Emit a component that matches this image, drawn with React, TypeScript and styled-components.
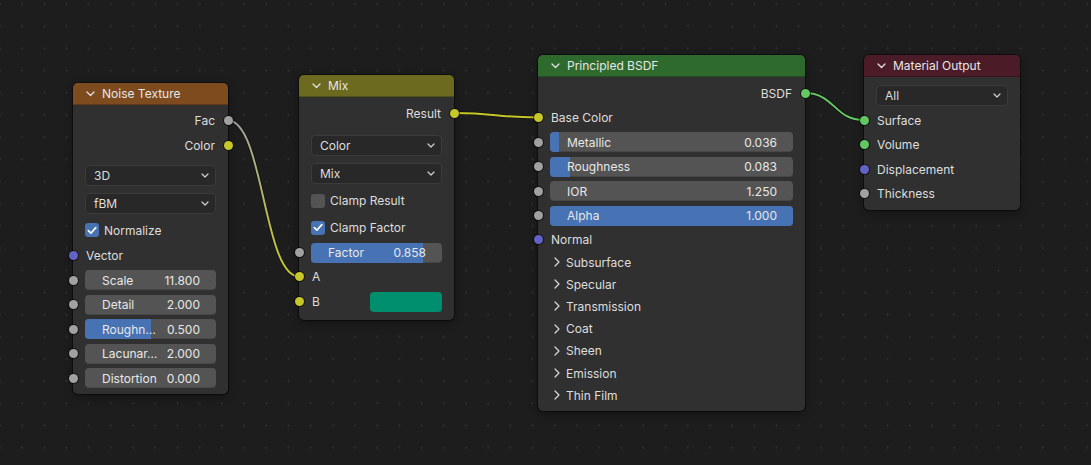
import styled, { createGlobalStyle } from "styled-components";

const GlobalStyle = createGlobalStyle`
  html, body {
    margin: 0;
    padding: 0;
    background: #1d1d1d;
  }
  body {
    font-family: Inter, "Noto Sans", "DejaVu Sans", sans-serif;
    font-size: 12px;
    color: #dedede;
  }
`;

const Canvas = styled.div`
  position: relative;
  width: 1091px;
  height: 465px;
  overflow: hidden;
  background-color: #1d1d1d;
  background-image: radial-gradient(circle, #2d2d2d 0.9px, transparent 1.3px);
  background-size: 22.2px 22.2px;
  background-position: -11.1px -7.1px;
`;

const Wires = styled.svg`
  position: absolute;
  left: 0;
  top: 0;
  z-index: 0;
`;

const NodeBox = styled.div<{ $x: number; $y: number; $w: number }>`
  position: absolute;
  left: ${(p) => p.$x}px;
  top: ${(p) => p.$y}px;
  width: ${(p) => p.$w}px;
  background: #303030;
  border-radius: 5px;
  box-shadow: 0 0 0 1px rgba(0, 0, 0, 0.45), 0 3px 8px rgba(0, 0, 0, 0.35);
  z-index: 1;
`;

const Header = styled.div<{ $color: string }>`
  display: flex;
  align-items: center;
  gap: 7px;
  height: 22px;
  box-sizing: border-box;
  padding-left: 13px;
  background: ${(p) => p.$color};
  border-radius: 5px 5px 0 0;
  border-bottom: 1px solid rgba(0, 0, 0, 0.25);
  color: #e6e6e6;
`;

const Body = styled.div<{ $top: number; $bottom: number }>`
  display: flex;
  flex-direction: column;
  padding: ${(p) => p.$top}px 0 ${(p) => p.$bottom}px;
`;

const Row = styled.div<{ $h: number; $end?: boolean }>`
  position: relative;
  display: flex;
  align-items: center;
  justify-content: ${(p) => (p.$end ? "flex-end" : "flex-start")};
  height: ${(p) => p.$h}px;
  padding: 0 12px;
`;

const Label = styled.span<{ $end?: boolean }>`
  ${(p) => (p.$end ? "margin-right: 1px;" : "margin-left: 1px;")}
  white-space: nowrap;
`;

const Socket = styled.span<{ $color: string; $out?: boolean }>`
  position: absolute;
  top: 50%;
  ${(p) => (p.$out ? "right: -4.5px;" : "left: -4.5px;")}
  width: 9px;
  height: 9px;
  margin-top: -4.5px;
  border-radius: 50%;
  background: ${(p) => p.$color};
  box-shadow: 0 0 0 1px rgba(0, 0, 0, 0.55);
`;

const Spacer = styled.div<{ $h: number }>`
  height: ${(p) => p.$h}px;
`;

const Dropdown = styled.div`
  flex: 1;
  display: flex;
  align-items: center;
  justify-content: space-between;
  height: 21px;
  box-sizing: border-box;
  padding: 0 6px 0 8px;
  background: #282828;
  border: 1px solid #3b3b3b;
  border-radius: 4px;
`;

const Slider = styled.div`
  position: relative;
  flex: 1;
  display: flex;
  align-items: center;
  justify-content: space-between;
  height: 20px;
  box-sizing: border-box;
  padding: 0 16px 0 17px;
  background: #545454;
  border-radius: 4px;
  overflow: hidden;
  color: #e8e8e8;
  box-shadow: inset 0 -1px 0 rgba(0, 0, 0, 0.15);
`;

const Fill = styled.div<{ $pct: number }>`
  position: absolute;
  left: 0;
  top: 0;
  bottom: 0;
  width: ${(p) => p.$pct}%;
  background: #4772b3;
`;

const SliderText = styled.span`
  position: relative;
  white-space: nowrap;
`;

const Check = styled.span<{ $on?: boolean }>`
  display: inline-flex;
  align-items: center;
  justify-content: center;
  width: 14px;
  height: 14px;
  margin-right: 5px;
  border-radius: 3px;
  background: ${(p) => (p.$on ? "#4772b3" : "#545454")};
`;

const Swatch = styled.div<{ $color: string }>`
  margin-left: auto;
  width: 72px;
  height: 20px;
  border-radius: 4px;
  background: ${(p) => p.$color};
`;

const PanelRow = styled.div`
  display: flex;
  align-items: center;
  gap: 6px;
  height: 22.2px;
  padding-left: 16px;
`;

const GREY = "#a1a1a1";
const YELLOW = "#c7c729";
const PURPLE = "#6363c7";
const GREEN = "#63c763";

const Chevron = () => (
  <svg width="9" height="6" viewBox="0 0 9 6">
    <path d="M1 1 L4.5 4.5 L8 1" fill="none" stroke="#e2e2e2" strokeWidth="1.3" strokeLinecap="round" strokeLinejoin="round" />
  </svg>
);

const SmallChevron = () => (
  <svg width="8" height="5" viewBox="0 0 8 5">
    <path d="M1 1 L4 4 L7 1" fill="none" stroke="#d0d0d0" strokeWidth="1.2" strokeLinecap="round" strokeLinejoin="round" />
  </svg>
);

const RightChevron = () => (
  <svg width="6" height="10" viewBox="0 0 6 10">
    <path d="M1 1 L5 5 L1 9" fill="none" stroke="#d8d8d8" strokeWidth="1.2" strokeLinecap="round" strokeLinejoin="round" />
  </svg>
);

const Tick = () => (
  <svg width="10" height="9" viewBox="0 0 10 9">
    <path d="M1.3 4.6 L3.9 7.2 L8.8 1.6" fill="none" stroke="#ffffff" strokeWidth="1.7" strokeLinecap="round" strokeLinejoin="round" />
  </svg>
);

function Output({ label, color, h = 24 }: { label: string; color: string; h?: number }) {
  return (
    <Row $h={h} $end>
      <Label $end>{label}</Label>
      <Socket $color={color} $out />
    </Row>
  );
}

function Input({ label, color, h = 24 }: { label: string; color: string; h?: number }) {
  return (
    <Row $h={h}>
      <Socket $color={color} />
      <Label>{label}</Label>
    </Row>
  );
}

function Select({ value, h = 28 }: { value: string; h?: number }) {
  return (
    <Row $h={h}>
      <Dropdown>
        <span>{value}</span>
        <SmallChevron />
      </Dropdown>
    </Row>
  );
}

function Toggle({ label, on, h }: { label: string; on?: boolean; h: number }) {
  return (
    <Row $h={h}>
      <Check $on={on}>{on && <Tick />}</Check>
      <span>{label}</span>
    </Row>
  );
}

function Value({ label, value, pct = 0, h = 24.5 }: { label: string; value: string; pct?: number; h?: number }) {
  return (
    <Row $h={h}>
      <Socket $color={GREY} />
      <Slider>
        <Fill $pct={pct} />
        <SliderText>{label}</SliderText>
        <SliderText>{value}</SliderText>
      </Slider>
    </Row>
  );
}

function Panel({ label }: { label: string }) {
  return (
    <PanelRow>
      <RightChevron />
      <span>{label}</span>
    </PanelRow>
  );
}

function link(x1: number, y1: number, x2: number, y2: number) {
  const d = Math.abs(x2 - x1) * 0.5;
  return `M${x1} ${y1} C${x1 + d} ${y1}, ${x2 - d} ${y2}, ${x2} ${y2}`;
}

export default function App() {
  const links = [
    { d: link(228, 120.5, 299, 276.5), stroke: "url(#facLink)" },
    { d: link(454, 113, 538, 117.5), stroke: YELLOW },
    { d: link(805, 93, 864, 120.25), stroke: GREEN },
  ];

  return (
    <>
      <GlobalStyle />
      <Canvas>
        <Wires width="1091" height="465">
          <defs>
            <linearGradient id="facLink" gradientUnits="userSpaceOnUse" x1="228" y1="120" x2="299" y2="277">
              <stop offset="0" stopColor={GREY} />
              <stop offset="1" stopColor={YELLOW} />
            </linearGradient>
          </defs>
          {links.map((l, i) => (
            <g key={i} fill="none">
              <path d={l.d} stroke="rgba(0,0,0,0.45)" strokeWidth="3.5" />
              <path d={l.d} stroke={l.stroke} strokeWidth="2" />
            </g>
          ))}
        </Wires>

        <NodeBox $x={73} $y={83} $w={155}>
          <Header $color="#7e4b1f">
            <Chevron />
            <span>Noise Texture</span>
          </Header>
          <Body $top={3} $bottom={3}>
            <Output label="Fac" color={GREY} h={25} />
            <Output label="Color" color={YELLOW} h={25} />
            <Spacer $h={3} />
            <Select value="3D" />
            <Select value="fBM" />
            <Toggle label="Normalize" on h={26} />
            <Input label="Vector" color={PURPLE} h={25} />
            <Value label="Scale" value="11.800" />
            <Value label="Detail" value="2.000" />
            <Value label="Roughn…" value="0.500" pct={50} />
            <Value label="Lacunar…" value="2.000" />
            <Value label="Distortion" value="0.000" />
          </Body>
        </NodeBox>

        <NodeBox $x={299} $y={75} $w={155}>
          <Header $color="#6b6a1e">
            <Chevron />
            <span>Mix</span>
          </Header>
          <Body $top={4} $bottom={6}>
            <Output label="Result" color={YELLOW} />
            <Spacer $h={6} />
            <Select value="Color" />
            <Select value="Mix" />
            <Toggle label="Clamp Result" h={27} />
            <Toggle label="Clamp Factor" on h={27} />
            <Value label="Factor" value="0.858" pct={85.8} h={23} />
            <Input label="A" color={YELLOW} h={25} />
            <Row $h={25}>
              <Socket $color={YELLOW} />
              <Label>B</Label>
              <Swatch $color="#008f6e" />
            </Row>
          </Body>
        </NodeBox>

        <NodeBox $x={538} $y={55} $w={267}>
          <Header $color="#2e6a2e">
            <Chevron />
            <span>Principled BSDF</span>
          </Header>
          <Body $top={4} $bottom={5}>
            <Output label="BSDF" color={GREEN} />
            <Input label="Base Color" color={YELLOW} h={25} />
            <Value label="Metallic" value="0.036" pct={3.6} />
            <Value label="Roughness" value="0.083" pct={8.3} />
            <Value label="IOR" value="1.250" />
            <Value label="Alpha" value="1.000" pct={100} />
            <Input label="Normal" color={PURPLE} h={23} />
            <Panel label="Subsurface" />
            <Panel label="Specular" />
            <Panel label="Transmission" />
            <Panel label="Coat" />
            <Panel label="Sheen" />
            <Panel label="Emission" />
            <Panel label="Thin Film" />
          </Body>
        </NodeBox>

        <NodeBox $x={864} $y={55} $w={156}>
          <Header $color="#4b1c27">
            <Chevron />
            <span>Material Output</span>
          </Header>
          <Body $top={6} $bottom={4}>
            <Select value="All" h={25} />
            <Input label="Surface" color={GREEN} h={24.5} />
            <Input label="Volume" color={GREEN} h={24.5} />
            <Input label="Displacement" color={PURPLE} h={24.5} />
            <Input label="Thickness" color={GREY} h={24.5} />
          </Body>
        </NodeBox>
      </Canvas>
    </>
  );
}
